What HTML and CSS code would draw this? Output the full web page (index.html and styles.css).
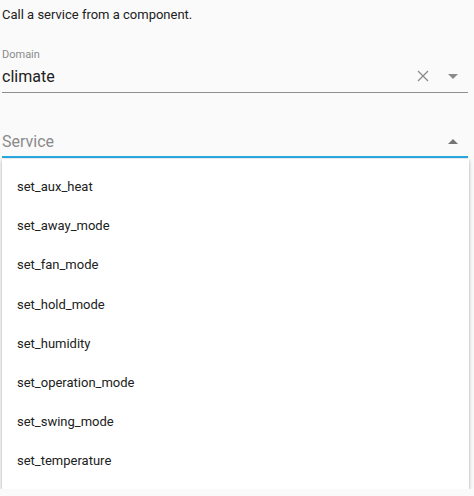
FILE: index.html
```html
<!DOCTYPE html>
<html>
<head>
<meta charset="utf-8">
<link rel="stylesheet" href="styles.css">
</head>
<body>
<div class="page">
  <p class="desc">Call a service from a component.</p>
  <div class="field domain">
    <div class="label">Domain</div>
    <div class="input-row">
      <span class="value">climate</span>
      <svg class="clear" width="12" height="12" viewBox="0 0 12 12"><path d="M1 1L11 11M11 1L1 11" stroke="#8a8a8a" stroke-width="1.3" fill="none"/></svg>
      <svg class="caret" width="10" height="5" viewBox="0 0 10 5"><path d="M0 0H10L5 5Z" fill="#8a8a8a"/></svg>
    </div>
  </div>
  <div class="field service">
    <div class="input-row">
      <span class="placeholder">Service</span>
      <svg class="caret up" width="10" height="5" viewBox="0 0 10 5"><path d="M0 5H10L5 0Z" fill="#757575"/></svg>
    </div>
    <div class="menu">
      <div class="item">set_aux_heat</div>
      <div class="item">set_away_mode</div>
      <div class="item">set_fan_mode</div>
      <div class="item">set_hold_mode</div>
      <div class="item">set_humidity</div>
      <div class="item">set_operation_mode</div>
      <div class="item">set_swing_mode</div>
      <div class="item">set_temperature</div>
    </div>
  </div>
</div>
</body>
</html>
```
FILE: styles.css
```css
html, body {
  margin: 0;
  padding: 0;
  background: #fafafa;
}
body {
  font-family: Roboto, "Liberation Sans", sans-serif;
  color: #212121;
}
.page {
  padding: 0 6px 0 2px;
}
.desc {
  margin: 0;
  padding-top: 7px;
  font-size: 13px;
  line-height: 16px;
  color: #212121;
}
.field.domain {
  margin-top: 25px;
}
.label {
  font-size: 11px;
  line-height: 14px;
  color: #8a8a8a;
}
.input-row {
  display: flex;
  align-items: center;
  height: 24px;
  border-bottom: 1px solid #8e8e8e;
}
.domain .input-row {
  margin-top: 2px;
  padding-bottom: 4px;
}
.value {
  flex: 1;
  font-size: 16px;
  color: #212121;
}
.clear {
  margin-right: 19px;
}
.caret {
  margin-right: 10px;
}
.field.service {
  margin-top: 36px;
}
.service .input-row {
  border-bottom: 2px solid #2aa8e0;
  padding-bottom: 3px;
}
.placeholder {
  flex: 1;
  font-size: 16px;
  color: #8a8a8a;
}
.menu {
  margin-top: 1px;
  margin-right: -1px;
  background: #fff;
  box-shadow: 0 2px 4px rgba(0,0,0,0.25), 0 0 2px rgba(0,0,0,0.12);
  padding: 8px 0 8px;
}
.item {
  height: 39.2px;
  display: flex;
  align-items: center;
  padding-left: 15px;
  font-size: 13px;
  color: #212121;
}
```
